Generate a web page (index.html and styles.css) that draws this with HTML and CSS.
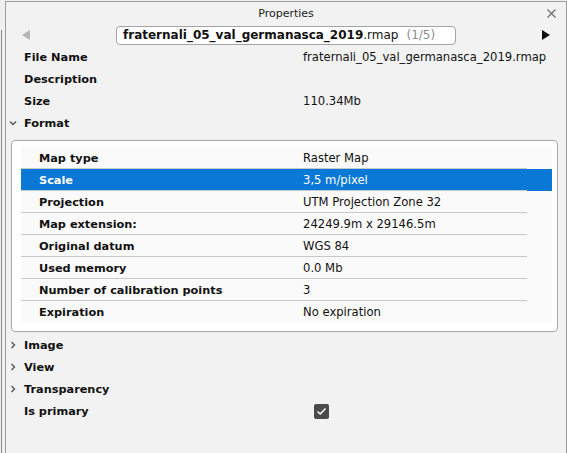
FILE: index.html
```html
<!DOCTYPE html>
<html lang="en">
<head>
  <meta charset="UTF-8">
  <title>Properties</title>
  <link rel="stylesheet" href="styles.css">
</head>
<body>
  <div class="side-rule"></div>
  <div class="window">
    <div class="titlebar">
      <span></span>
      <span class="title">Properties</span>
      <span class="close">
        <svg width="9" height="9" viewBox="0 0 9 9"><path d="M0.5 0.5L8.5 8.5M8.5 0.5L0.5 8.5" stroke="#6a6a6a" stroke-width="1.1" fill="none"/></svg>
      </span>
    </div>

    <div class="nav">
      <span class="arrow prev"><svg width="8" height="10" viewBox="0 0 8 10"><path d="M8 0V10L0 5Z" fill="#b4b4b4"/></svg></span>
      <div class="file-box"><b>fraternali_05_val_germanasca_2019</b>.rmap<span class="count">(1/5)</span></div>
      <span class="arrow next"><svg width="8" height="10" viewBox="0 0 8 10"><path d="M0 0V10L8 5Z" fill="#111"/></svg></span>
    </div>

    <div class="prop"><span></span><span class="label">File Name</span><span class="value">fraternali_05_val_germanasca_2019.rmap</span></div>
    <div class="prop"><span></span><span class="label">Description</span><span class="value"></span></div>
    <div class="prop"><span></span><span class="label">Size</span><span class="value">110.34Mb</span></div>
    <div class="prop">
      <span class="chevron down"><svg width="8" height="6" viewBox="0 0 8 6"><path d="M1 1.5L4 4.5L7 1.5" stroke="#555" stroke-width="1.4" fill="none"/></svg></span>
      <span class="label">Format</span><span class="value"></span>
    </div>

    <div class="group-box">
      <div class="table">
        <div class="row"><span class="label">Map type</span><span class="value">Raster Map</span></div>
        <div class="row selected"><span class="label">Scale</span><span class="value">3,5 m/pixel</span></div>
        <div class="row"><span class="label">Projection</span><span class="value">UTM Projection Zone 32</span></div>
        <div class="row"><span class="label">Map extension:</span><span class="value">24249.9m x 29146.5m</span></div>
        <div class="row"><span class="label">Original datum</span><span class="value">WGS 84</span></div>
        <div class="row"><span class="label">Used memory</span><span class="value">0.0 Mb</span></div>
        <div class="row"><span class="label">Number of calibration points</span><span class="value">3</span></div>
        <div class="row last"><span class="label">Expiration</span><span class="value">No expiration</span></div>
      </div>
    </div>

    <div class="prop">
      <span class="chevron"><svg width="6" height="8" viewBox="0 0 6 8"><path d="M1.5 1L4.5 4L1.5 7" stroke="#555" stroke-width="1.4" fill="none"/></svg></span>
      <span class="label">Image</span><span class="value"></span>
    </div>
    <div class="prop">
      <span class="chevron"><svg width="6" height="8" viewBox="0 0 6 8"><path d="M1.5 1L4.5 4L1.5 7" stroke="#555" stroke-width="1.4" fill="none"/></svg></span>
      <span class="label">View</span><span class="value"></span>
    </div>
    <div class="prop">
      <span class="chevron"><svg width="6" height="8" viewBox="0 0 6 8"><path d="M1.5 1L4.5 4L1.5 7" stroke="#555" stroke-width="1.4" fill="none"/></svg></span>
      <span class="label">Transparency</span><span class="value"></span>
    </div>
    <div class="prop">
      <span></span><span class="label">Is primary</span>
      <span class="value"><span class="checkbox"><svg width="11" height="9" viewBox="0 0 11 9"><path d="M1.5 4.5L4.2 7L9.5 1.5" stroke="#fff" stroke-width="1.5" fill="none"/></svg></span></span>
    </div>
  </div>
</body>
</html>
```

FILE: styles.css
```css
html, body {
  margin: 0;
  height: 100%;
}
body {
  background: #f0f0f0;
  font-family: "DejaVu Sans", sans-serif;
  color: #111;
  padding-top: 1px;
  box-sizing: border-box;
  overflow: hidden;
}
.side-rule {
  position: absolute;
  left: 1px;
  top: 30px;
  bottom: 0;
  width: 1px;
  background: #8a8a8a;
}
.window {
  margin-left: 5px;
  width: 562px;
  height: 460px;
  box-sizing: border-box;
  border: 1px solid #9c9c9c;
  background: #f2f2f2;
}
.titlebar {
  display: grid;
  grid-template-columns: 1fr auto 1fr;
  align-items: center;
  height: 22px;
}
.title {
  font-size: 11px;
  color: #222;
}
.close {
  justify-self: end;
  display: flex;
  margin-right: 10px;
}
.nav {
  display: flex;
  align-items: center;
  height: 22px;
}
.arrow {
  display: flex;
  flex: none;
  width: 8px;
}
.arrow.prev {
  margin-left: 16px;
}
.arrow.next {
  margin-left: auto;
  margin-right: 16px;
}
.file-box {
  flex: none;
  width: 340px;
  height: 19px;
  margin-left: 86px;
  box-sizing: border-box;
  border: 1px solid #a4a4a4;
  border-radius: 4px;
  background: #fff;
  font-size: 12px;
  line-height: 17px;
  padding-left: 6px;
  white-space: nowrap;
  overflow: hidden;
}
.file-box b {
  font-weight: bold;
}
.count {
  color: #8c8c8c;
  margin-left: 8px;
}
.prop {
  display: grid;
  grid-template-columns: 18px 279px 1fr;
  align-items: center;
  height: 22px;
}
.chevron {
  display: flex;
  padding-left: 4px;
}
.chevron.down {
  padding-left: 3px;
}
.label {
  font-weight: bold;
  font-size: 11.3px;
}
.value {
  font-size: 11.6px;
  display: flex;
  align-items: center;
}
.group-box {
  margin: 6px 8px 2px 5px;
  border: 1px solid #a8a8a8;
  border-radius: 4px;
  background: #fff;
  padding: 6px 5px 8px 9px;
}
.table {
  background: #fafafa;
}
.row {
  display: grid;
  grid-template-columns: 18px 264px 1fr;
  align-items: center;
  height: 22px;
  background: linear-gradient(#c8c8c8, #c8c8c8) no-repeat left bottom / calc(100% - 25px) 1px;
}
.row .label {
  grid-column: 2;
}
.row.selected {
  background-color: #0a78d6;
  color: #fff;
}
.row.last {
  background-image: none;
}
.checkbox {
  display: flex;
  align-items: center;
  justify-content: center;
  width: 15px;
  height: 15px;
  margin-left: 11px;
  border-radius: 2px;
  background: #4b4b4b;
}
```
